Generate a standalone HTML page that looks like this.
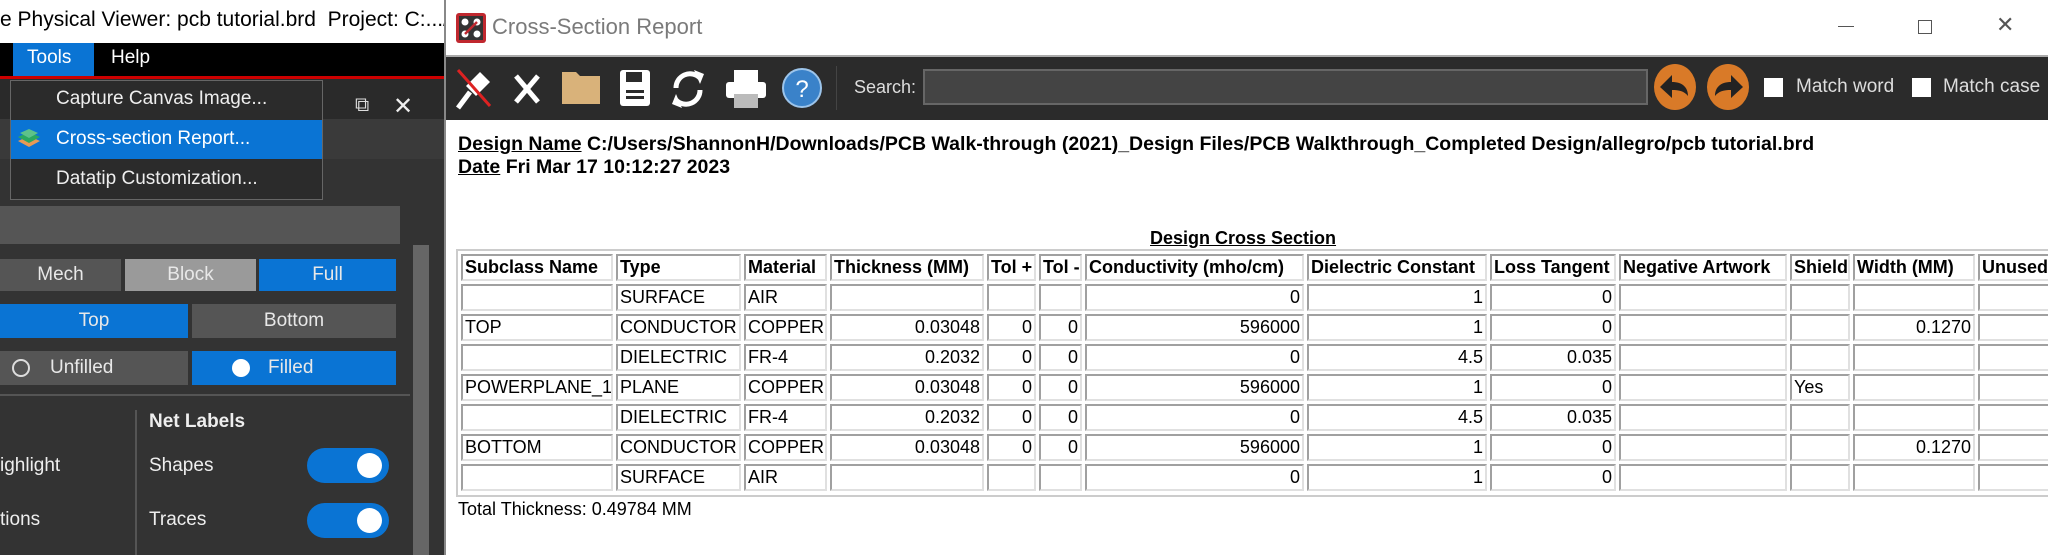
<!DOCTYPE html>
<html><head><meta charset="utf-8"><style>
*{margin:0;padding:0;box-sizing:border-box}
body{width:2048px;height:555px;overflow:hidden;position:relative;background:#fff;font-family:"Liberation Sans Narrow","Liberation Sans",sans-serif}
.a{position:absolute}
.lp{left:0;top:0;width:444px;height:555px;background:#333}
.btn{position:absolute;color:#e8e8e8;font-size:19px;text-align:center;line-height:34px}
.blue{background:#0a74d4}
.grey{background:#555}
.tg{position:absolute;width:82px;height:35px;border-radius:18px;background:#0a74d4}
.tg::after{content:"";position:absolute;right:7px;top:5px;width:25px;height:25px;border-radius:50%;background:#fff}
table{border-collapse:separate;border-spacing:3px;table-layout:fixed;font-size:18px;color:#000}
td{border:2px solid;border-color:#a0a0a0 #e0e0e0 #e0e0e0 #a0a0a0;height:27px;padding:0 2px;white-space:nowrap;overflow:hidden;line-height:23px}
td.r{text-align:right}
tr.h td{font-weight:bold}
</style></head><body>
<div class="a lp"></div>
<div class="a" style="left:0;top:0;width:444px;height:43px;background:#fff;font-family:'Liberation Sans',sans-serif;font-size:21px;line-height:40px;white-space:nowrap;color:#000;overflow:hidden">e Physical Viewer: pcb tutorial.brd &nbsp;Project: C:.../</div>
<div class="a" style="left:0;top:43px;width:444px;height:33px;background:#000"></div>
<div class="a blue" style="left:13px;top:43px;width:81px;height:33px"></div>
<div class="a" style="left:27px;top:47px;color:#fff;font-size:19px">Tools</div>
<div class="a" style="left:111px;top:47px;color:#fff;font-size:19px">Help</div>
<div class="a" style="left:0;top:76px;width:444px;height:3px;background:#c00"></div>
<div class="a" style="left:0;top:79px;width:444px;height:40px;background:#2a2a2a"></div>
<div class="a" style="left:355px;top:94px;color:#ddd;font-size:20px">⧉</div>
<div class="a" style="left:393px;top:92px;color:#eee;font-size:24px">✕</div>
<div class="a" style="left:0;top:119px;width:444px;height:40px;background:#3a3a3a"></div>
<div class="a" style="left:0;top:206px;width:400px;height:38px;background:#555"></div>
<div class="a" style="left:413px;top:245px;width:16px;height:310px;background:#666"></div>
<div class="a" style="left:10px;top:80px;width:313px;height:120px;background:#2b2b2b;border:1px solid #666"></div>
<div class="a" style="left:56px;top:88px;color:#eee;font-size:19px">Capture Canvas Image...</div>
<div class="a blue" style="left:11px;top:120px;width:311px;height:39px"></div>
<div class="a" style="left:16px;top:127px;width:26px;height:24px"><svg width="26" height="24"><path d="M2 14 L13 9 L24 14 L13 20Z" fill="#e89a55"/><path d="M2 10 L13 5 L24 10 L13 16Z" fill="#2aa860"/><path d="M4 6 L13 2 L22 6 L13 11Z" fill="#5dc28a"/></svg></div>
<div class="a" style="left:56px;top:128px;color:#fff;font-size:19px">Cross-section Report...</div>
<div class="a" style="left:56px;top:168px;color:#eee;font-size:19px">Datatip Customization...</div>
<div class="btn grey" style="left:0;top:259px;width:121px;height:32px;line-height:32px">Mech</div>
<div class="btn" style="left:125px;top:259px;width:131px;height:32px;line-height:32px;background:#9a9a9a">Block</div>
<div class="btn blue" style="left:259px;top:259px;width:137px;height:32px;line-height:32px">Full</div>
<div class="btn blue" style="left:0;top:304px;width:188px;height:34px">Top</div>
<div class="btn grey" style="left:192px;top:304px;width:204px;height:34px">Bottom</div>
<div class="btn grey" style="left:0;top:351px;width:188px;height:34px;text-align:left;padding-left:50px">Unfilled</div>
<div class="a" style="left:12px;top:359px;width:18px;height:18px;border:2px solid #ddd;border-radius:50%"></div>
<div class="btn blue" style="left:192px;top:351px;width:204px;height:34px;text-align:left;padding-left:76px">Filled</div>
<div class="a" style="left:232px;top:359px;width:18px;height:18px;background:#fff;border-radius:50%"></div>
<div class="a" style="left:0;top:394px;width:410px;height:2px;background:#555"></div>
<div class="a" style="left:135px;top:410px;width:2px;height:145px;background:#555"></div>
<div class="a" style="left:149px;top:411px;color:#eee;font-size:19px;font-weight:bold">Net Labels</div>
<div class="a" style="left:0;top:455px;color:#eee;font-size:19px">ighlight</div>
<div class="a" style="left:149px;top:455px;color:#eee;font-size:19px">Shapes</div>
<div class="tg" style="left:307px;top:448px"></div>
<div class="a" style="left:0;top:509px;color:#eee;font-size:19px">tions</div>
<div class="a" style="left:149px;top:509px;color:#eee;font-size:19px">Traces</div>
<div class="tg" style="left:307px;top:503px"></div>
<div class="a" style="left:1020px;top:0;width:90px;height:3px;background:#0a74d4"></div>
<div class="a" style="left:444px;top:0;width:1604px;height:555px;background:#fff;border-left:2px solid #888"></div>
<div class="a" style="left:456px;top:13px;width:30px;height:30px;background:#c0282f;border-radius:3px"><svg width="30" height="30"><rect x="3" y="3" width="24" height="24" fill="#333"/><circle cx="9" cy="9" r="3.5" fill="#fff"/><circle cx="21" cy="9" r="3.5" fill="#fff"/><circle cx="9" cy="21" r="3.5" fill="#fff"/><circle cx="21" cy="21" r="3.5" fill="#fff"/><line x1="21" y1="9" x2="9" y2="21" stroke="#c0282f" stroke-width="2.5"/></svg></div>
<div class="a" style="left:492px;top:14px;color:#7a7a7a;font-size:22px">Cross-Section Report</div>
<div class="a" style="left:1838px;top:26px;width:16px;height:1px;background:#555"></div>
<div class="a" style="left:1918px;top:20px;width:14px;height:14px;border:1px solid #555"></div>
<div class="a" style="left:1996px;top:12px;color:#555;font-size:22px">✕</div>
<div class="a" style="left:446px;top:55px;width:1602px;height:65px;background:#2b2b2b;border-top:2px solid #aaa"></div>
<svg class="a" style="left:450px;top:64px" width="380" height="48">
<g stroke="#fff" stroke-width="5" fill="none"><line x1="8" y1="44" x2="20" y2="28"/></g>
<path d="M16 22 L30 8 L40 18 L26 32Z" fill="#fff"/><line x1="8" y1="6" x2="40" y2="42" stroke="#d22" stroke-width="3"/>
<g stroke="#fff" stroke-width="5"><line x1="66" y1="12" x2="88" y2="38"/><line x1="88" y1="12" x2="66" y2="38"/></g>
<path d="M112 8 h14 l4 4 h20 v28 h-38z" fill="#d9b27a"/>
<rect x="170" y="6" width="30" height="36" rx="3" fill="#fff"/><rect x="176" y="8" width="16" height="10" fill="#2b2b2b"/><rect x="176" y="26" width="18" height="3" fill="#2b2b2b"/><rect x="176" y="32" width="18" height="3" fill="#2b2b2b"/>
<path d="M226 24 a14 14 0 0 1 24 -10" stroke="#fff" stroke-width="5" fill="none"/><path d="M244 6 l10 4 l-4 10z" fill="#fff"/>
<path d="M250 26 a14 14 0 0 1 -24 10" stroke="#fff" stroke-width="5" fill="none"/><path d="M232 44 l-10 -4 l4 -10z" fill="#fff"/>
<rect x="284" y="6" width="24" height="12" fill="#fff"/><rect x="276" y="18" width="40" height="16" rx="3" fill="#fff"/><rect x="284" y="30" width="24" height="14" fill="#bbb"/>
<circle cx="352" cy="24" r="19" fill="#3a82c9" stroke="#9cc4ea" stroke-width="2"/><text x="352" y="33" fill="#fff" font-size="24" text-anchor="middle" font-family="Liberation Sans">?</text>
</svg>
<div class="a" style="left:836px;top:66px;width:1px;height:44px;background:#444"></div>
<div class="a" style="left:854px;top:77px;color:#ddd;font-size:18px">Search:</div>
<div class="a" style="left:923px;top:69px;width:725px;height:36px;background:#444;border:2px solid #666"></div>
<svg class="a" style="left:1654px;top:63px" width="100" height="48"><ellipse cx="21" cy="24" rx="21" ry="23" fill="#d97a28"/><ellipse cx="74" cy="24" rx="21" ry="23" fill="#d97a28"/><path d="M6 24 l12 -12 v7 c10 0 16 5 16 14 c-4 -5 -9 -6 -16 -6 v8z" fill="#222"/><path d="M89 24 l-12 -12 v7 c-10 0 -16 5 -16 14 c4 -5 9 -6 16 -6 v8z" fill="#222"/></svg>
<div class="a" style="left:1764px;top:78px;width:19px;height:19px;background:#fff"></div>
<div class="a" style="left:1796px;top:76px;color:#ddd;font-size:19px">Match word</div>
<div class="a" style="left:1912px;top:78px;width:19px;height:19px;background:#fff"></div>
<div class="a" style="left:1943px;top:76px;color:#ddd;font-size:19px;white-space:nowrap">Match case</div>
<div class="a" style="left:458px;top:133px;font-size:19.5px;font-weight:bold;white-space:nowrap"><u>Design Name</u> C:/Users/ShannonH/Downloads/PCB Walk-through (2021)_Design Files/PCB Walkthrough_Completed Design/allegro/pcb tutorial.brd</div>
<div class="a" style="left:458px;top:156px;font-size:19.5px;font-weight:bold"><u>Date</u> Fri Mar 17 10:12:27 2023</div>
<div class="a" style="left:1150px;top:228px;font-size:18px;font-weight:bold;text-decoration:underline">Design Cross Section</div>
<div class="a" style="left:456px;top:249px;width:1592px;height:248px;overflow:hidden;border-left:2px solid #ccc;border-top:2px solid #ccc;border-bottom:2px solid #ccc">
<table style="width:1700px"><colgroup><col style="width:152px"><col style="width:125px"><col style="width:83px"><col style="width:154px"><col style="width:49px"><col style="width:43px"><col style="width:219px"><col style="width:180px"><col style="width:126px"><col style="width:168px"><col style="width:60px"><col style="width:122px"><col style="width:180px"></colgroup>
<tr class="h"><td>Subclass Name</td><td>Type</td><td>Material</td><td>Thickness (MM)</td><td>Tol +</td><td>Tol -</td><td>Conductivity (mho/cm)</td><td>Dielectric Constant</td><td>Loss Tangent</td><td>Negative Artwork</td><td>Shield</td><td>Width (MM)</td><td>Unused</td></tr>
<tr><td></td><td>SURFACE</td><td>AIR</td><td></td><td></td><td></td><td class="r">0</td><td class="r">1</td><td class="r">0</td><td></td><td></td><td></td><td></td></tr>
<tr><td>TOP</td><td>CONDUCTOR</td><td>COPPER</td><td class="r">0.03048</td><td class="r">0</td><td class="r">0</td><td class="r">596000</td><td class="r">1</td><td class="r">0</td><td></td><td></td><td class="r">0.1270</td><td></td></tr>
<tr><td></td><td>DIELECTRIC</td><td>FR-4</td><td class="r">0.2032</td><td class="r">0</td><td class="r">0</td><td class="r">0</td><td class="r">4.5</td><td class="r">0.035</td><td></td><td></td><td></td><td></td></tr>
<tr><td>POWERPLANE_1</td><td>PLANE</td><td>COPPER</td><td class="r">0.03048</td><td class="r">0</td><td class="r">0</td><td class="r">596000</td><td class="r">1</td><td class="r">0</td><td></td><td>Yes</td><td></td><td></td></tr>
<tr><td></td><td>DIELECTRIC</td><td>FR-4</td><td class="r">0.2032</td><td class="r">0</td><td class="r">0</td><td class="r">0</td><td class="r">4.5</td><td class="r">0.035</td><td></td><td></td><td></td><td></td></tr>
<tr><td>BOTTOM</td><td>CONDUCTOR</td><td>COPPER</td><td class="r">0.03048</td><td class="r">0</td><td class="r">0</td><td class="r">596000</td><td class="r">1</td><td class="r">0</td><td></td><td></td><td class="r">0.1270</td><td></td></tr>
<tr><td></td><td>SURFACE</td><td>AIR</td><td></td><td></td><td></td><td class="r">0</td><td class="r">1</td><td class="r">0</td><td></td><td></td><td></td><td></td></tr>
</table></div>
<div class="a" style="left:458px;top:499px;font-size:18px">Total Thickness: 0.49784 MM</div>
</body></html>
